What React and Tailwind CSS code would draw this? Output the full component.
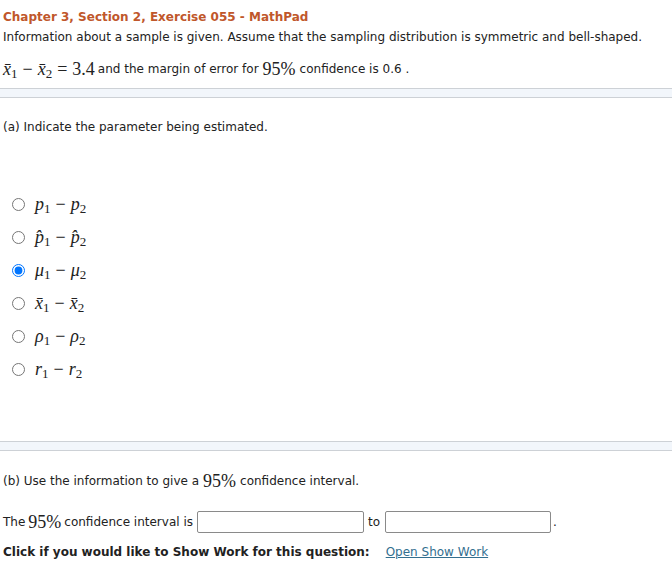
import React from 'react';

const sans = { fontFamily: '"DejaVu Sans", Verdana, sans-serif' };

const M = ({ children, className = '' }) => (
  <span className={`font-['Liberation_Serif',serif] text-[18px] ${className}`}>{children}</span>
);

const V = ({ children }) => <span className="italic">{children}</span>;
const S = ({ children }) => <sub className="not-italic text-[13px]">{children}</sub>;
const Minus = () => <span className="mx-[5px] not-italic">−</span>;

const options = [
  { id: 'p', el: (<><V>p</V><S>1</S><Minus /><V>p</V><S>2</S></>) },
  { id: 'phat', el: (<><V>p̂</V><S>1</S><Minus /><V>p̂</V><S>2</S></>) },
  { id: 'mu', el: (<><V>μ</V><S>1</S><Minus /><V>μ</V><S>2</S></>), checked: true },
  { id: 'xbar', el: (<><V>x̄</V><S>1</S><Minus /><V>x̄</V><S>2</S></>) },
  { id: 'rho', el: (<><V>ρ</V><S>1</S><Minus /><V>ρ</V><S>2</S></>) },
  { id: 'r', el: (<><V>r</V><S>1</S><Minus /><V>r</V><S>2</S></>) },
];

const Divider = ({ className = '' }) => (
  <div className={`h-[10px] border-y border-[#cdd1d6] bg-[#f2f6fb] ${className}`}></div>
);

export default function App() {
  return (
    <div className="bg-white text-[#222] text-[12px] w-[672px] h-[581px] overflow-hidden" style={sans}>
      {/* Header */}
      <div className="px-[3px] pt-[9px]">
        <div className="h-[16px] leading-[16px] font-bold text-[#c0572b]">
          Chapter 3, Section 2, Exercise 055 - MathPad
        </div>
        <div className="mt-[4px] h-[16px] leading-[16px] whitespace-nowrap">
          Information about a sample is given. Assume that the sampling distribution is symmetric and bell-shaped.
        </div>
        <div className="mt-[12px] h-[24px] flex items-center whitespace-nowrap">
          <M>
            <V>x̄</V><S>1</S><Minus /><V>x̄</V><S>2</S>
            <span className="mx-[5px]">=</span>3.4
          </M>
          <span className="ml-[3px]">and the margin of error for</span>
          <M className="ml-[4px]">95%</M>
          <span className="ml-[4px]">confidence is 0.6 .</span>
        </div>
      </div>

      <Divider className="mt-[7px]" />

      {/* Part (a) */}
      <div className="px-[3px] mt-[21px] h-[16px] leading-[16px]">(a) Indicate the parameter being estimated.</div>

      <div className="mt-[53px]">
        {options.map((o) => (
          <label key={o.id} className="h-[33px] flex items-center">
            <input
              type="radio"
              name="param"
              defaultChecked={o.checked}
              className="ml-[12px] w-[13px] h-[13px] m-0"
            />
            <M className="ml-[10px]">{o.el}</M>
          </label>
        ))}
      </div>

      <Divider className="mt-[55px]" />

      {/* Part (b) */}
      <div className="px-[3px] mt-[22px] h-[16px] flex items-center">
        <span>(b) Use the information to give a</span>
        <M className="ml-[4px]">95%</M>
        <span className="ml-[4px]">confidence interval.</span>
      </div>

      <div className="px-[3px] mt-[21px] h-[24px] flex items-center">
        <span>The</span>
        <M className="ml-[3px]">95%</M>
        <span className="ml-[3px]">confidence interval is</span>
        <input type="text" className="ml-[4px] w-[167px] h-[22px] border border-[#8a8a8a] rounded-[2px] bg-white" />
        <span className="ml-[4px]">to</span>
        <input type="text" className="ml-[5px] w-[166px] h-[22px] border border-[#8a8a8a] rounded-[2px] bg-white" />
        <span className="ml-[2px]">.</span>
      </div>

      <div className="px-[3px] mt-[10px] h-[16px] flex items-center">
        <span className="font-bold">Click if you would like to Show Work for this question:</span>
        <a href="#showwork" className="ml-[16px] text-[#336f8f] underline">Open Show Work</a>
      </div>
    </div>
  );
}
